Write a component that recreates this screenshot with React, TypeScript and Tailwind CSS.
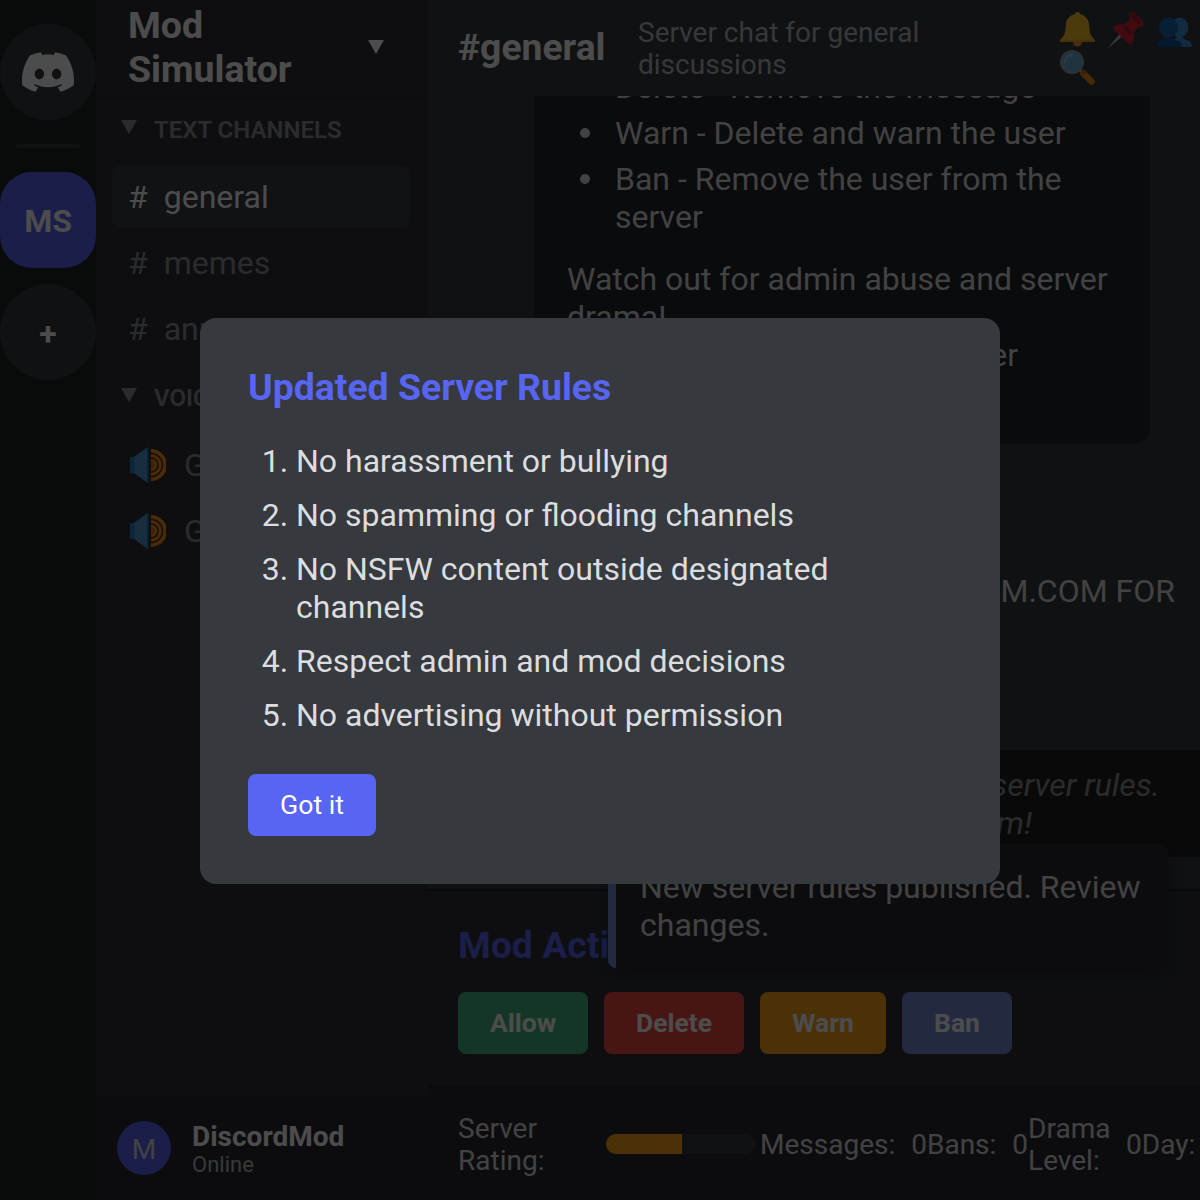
import { useState } from "react";
import { SiDiscord } from "react-icons/si";

const TEXT_CHANNELS = ["general", "memes", "announcements"];
const VOICE_CHANNELS = ["General", "Gaming"];

const RULES = [
  "No harassment or bullying",
  "No spamming or flooding channels",
  "No NSFW content outside designated channels",
  "Respect admin and mod decisions",
  "No advertising without permission",
];

const HELP_ITEMS = [
  "Delete - Remove the message",
  "Warn - Delete and warn the user",
  "Ban - Remove the user from the server",
];

const ACTIONS = [
  { label: "Allow", className: "w-[130px] bg-[#43b581]" },
  { label: "Delete", className: "w-[140px] bg-[#f04747]" },
  { label: "Warn", className: "w-[126px] bg-[#faa61a]" },
  { label: "Ban", className: "w-[110px] bg-[#7289da]" },
];

function Caret() {
  return (
    <svg width="16" height="14" viewBox="0 0 16 14" fill="currentColor" className="shrink-0">
      <path d="M0 0h16L8 14z" />
    </svg>
  );
}

function BellIcon() {
  return (
    <svg width="35" height="35" viewBox="0 0 35 35">
      <path d="M13 30a4.5 4.5 0 0 0 9 0z" fill="#f29a16" />
      <path
        d="M17.5 0c1.7 0 2.6 1 2.6 2.3 5.3 1.2 8.6 5 9 10.5.4 6.500.6 10 4.4 13.700 1 1 1.500 1.800 1.500 3.500H0c0-1.700.5-2.500 1.500-3.500C5.300 22.800 5.500 19.300 5.900 12.800c.4-5.500 3.700-9.300 9-10.500C14.900 1 15.800 0 17.500 0z"
        fill="#fbc62a"
      />
      <path d="M.5 27.500h34c.3.7.5 1.500.5 2.500H0c0-1 .2-1.800.5-2.500z" fill="#eba91c" />
    </svg>
  );
}

function PinIcon() {
  return (
    <svg width="35" height="35" viewBox="0 0 35 35">
      <path d="M11.500 21.500L.6 34.400l12.900-10.600z" fill="#b8c4cc" stroke="#b8c4cc" strokeWidth=".8" strokeLinejoin="round" />
      <path
        d="M21 .8c1.200-1.200 3.500-.7 6 1.400l5.500 5.700c2.200 2.700 2.900 5.200 1.700 6.400-1 1-2.700 1-4.500.2l-5.300 6.300c1 3.600.6 7.300-1.500 10.300-1.200 1.500-3 .9-5.200-.9L6.300 19.300c-1.900-2.200-2.400-4-.9-5.200 3-2 6.500-2.400 10-1.500l5.800-5.300C20.200 5.300 19.800 2 21 .8z"
        fill="#dd2638"
      />
      <path d="M22 1.500c1.700-.6 4.200 1 6.700 3.600s4.100 5.400 3.300 6.900c-1.500 1-4.500-.8-7-3.400s-4-5.800-3-7.100z" fill="#b31b2c" />
      <path d="M16 13l8 7.500-2.500 2.500-8-7.500z" fill="#b31b2c" />
    </svg>
  );
}

function PeopleIcon() {
  return (
    <svg width="35" height="35" viewBox="0 0 35 35">
      <ellipse cx="22.500" cy="15.500" rx="8.800" ry="10" fill="#3f91d0" />
      <path d="M15 35c0-6 2-9 6.500-10h4c.5 1.500 2 2.500 5.500 3.500 2.600.8 4 3 4 6.500z" fill="#3f91d0" />
      <ellipse cx="11.500" cy="15.500" rx="9.500" ry="10" fill="#1769ad" />
      <path d="M0 35c0-4 1.500-6.300 5-7.300 2-.6 3-1.200 3-2.700h7c0 1.500 1 2.100 3 2.700 4.500 1.300 7 3.300 7 7.300z" fill="#10509b" />
    </svg>
  );
}

function SearchIcon() {
  return (
    <svg width="35" height="35" viewBox="0 0 35 35">
      <path d="M18 18l6 6" stroke="#9aa5ad" strokeWidth="3" />
      <circle cx="12" cy="12" r="11" fill="#6dadd3" stroke="#92a4b0" strokeWidth="2" />
      <path d="M5 12a7 7 0 0 1 7-7" fill="none" stroke="#8dc9e4" strokeWidth="2.500" strokeLinecap="round" />
      <path d="M23.500 23.500L31.500 31.500" stroke="#f28a13" strokeWidth="6.500" strokeLinecap="round" />
      <path d="M22 21l3 3" stroke="#c0741e" strokeWidth="4" />
    </svg>
  );
}

function SpeakerIcon() {
  return (
    <svg width="36" height="36" viewBox="0 0 36 36">
      <path d="M4 10L18 0v36L4 26z" fill="#4a9cd8" />
      <path d="M0 10h4.500v16H0z" fill="#2583c9" />
      <path d="M17 1h2v34h-2z" fill="#27669c" />
      <path d="M21 2a16 16 0 0 1 0 32z" fill="#f6921e" />
      <path
        d="M21 6.500a11.500 11.500 0 0 1 0 23M21 11a7 7 0 0 1 0 14"
        fill="none"
        stroke="#4d3414"
        strokeWidth="1.600"
      />
      <path d="M21 14.500a3.500 3.500 0 0 1 0 7z" fill="#c9780f" />
    </svg>
  );
}

function ServerRail() {
  return (
    <nav className="flex w-24 shrink-0 flex-col items-center bg-[#202224] pt-6 font-bold text-white">
      <div className="flex size-24 items-center justify-center rounded-full bg-[#36393f]">
        <SiDiscord size={52} />
      </div>
      <div className="my-6 h-1 w-16 rounded-sm bg-[#36393f]" />
      <div className="flex size-24 items-center justify-center rounded-[32px] bg-[#5865f2] pt-0.5 text-[32px]">MS</div>
      <div className="mt-4 flex size-24 items-center justify-center rounded-full bg-[#36393f] pt-[3px] text-[32px]">+</div>
    </nav>
  );
}

function Category({ label }: { label: string }) {
  return (
    <div className="flex h-7 items-center gap-[17px] pl-[9px] text-2xl font-semibold text-[#8e9297]">
      <span className="-mt-1.5">
        <Caret />
      </span>
      <span className="whitespace-nowrap">{label}</span>
    </div>
  );
}

function Sidebar() {
  return (
    <aside className="flex w-[332px] shrink-0 flex-col bg-[#2f3136]">
      <header className="flex h-[98px] items-center justify-between border-b-2 border-[#26282c] pr-11 pl-8 text-white">
        <h1 className="-mt-0.5 w-[180px] text-[37.5px] leading-[44px] font-bold">Mod Simulator</h1>
        <span className="-mt-0.5">
          <Caret />
        </span>
      </header>
      <div className="flex-1 pt-[18px] pr-[18px] pl-4">
        <Category label="TEXT CHANNELS" />
        <ul className="mt-[22px] flex flex-col gap-1">
          {TEXT_CHANNELS.map((name) => (
            <li
              key={name}
              className={
                name === "general"
                  ? "flex h-[62px] items-center gap-4 rounded-lg bg-[#393c43] px-4 text-white"
                  : "flex h-[62px] items-center gap-4 rounded-lg px-4 text-[#8e9297]"
              }
            >
              <span>#</span>
              <span>{name}</span>
            </li>
          ))}
        </ul>
        <div className="mt-6">
          <Category label="VOICE CHANNELS" />
        </div>
        <ul className="mt-[22px] flex flex-col gap-1">
          {VOICE_CHANNELS.map((name) => (
            <li key={name} className="flex h-[62px] items-center gap-4 px-4 text-[#8e9297]">
              <span className="w-10 pl-0.5">
                <SpeakerIcon />
              </span>
              <span>{name}</span>
            </li>
          ))}
        </ul>
      </div>
      <footer className="flex h-[104px] items-center gap-[21px] bg-[#292b2f] pl-[21px]">
        <div className="flex size-[54px] items-center justify-center rounded-full bg-[#5865f2] pt-1 text-[28px] text-[#dcddde]">M</div>
        <div className="pt-0.5">
          <div className="text-[28px] leading-8 font-bold text-white">DiscordMod</div>
          <div className="text-[22px] leading-6 text-[#b9bbbe]">Online</div>
        </div>
      </footer>
    </aside>
  );
}

function ChatHeader() {
  return (
    <header className="flex h-24 shrink-0 items-center bg-[#36393f] pl-[30px]">
      <h2 className="-mt-0.5 w-[180px] shrink-0 text-[37.3px] font-bold text-white">#general</h2>
      <p className="mt-0.5 w-[422px] shrink-0 pr-24 text-[28px] leading-8 text-[#b9bbbe]">
        Server chat for general discussions
      </p>
      <div className="flex w-[136px] shrink-0 flex-wrap gap-x-[13.5px] gap-y-[3px]">
        <BellIcon />
        <PinIcon />
        <PeopleIcon />
        <SearchIcon />
      </div>
    </header>
  );
}

function Messages() {
  return (
    <section className="flex min-h-0 flex-1 flex-col justify-end overflow-hidden leading-[38px] text-[#dcddde]">
      <div className="mr-[50px] ml-[106px] rounded-2xl bg-[#242529] px-[33px] pb-8">
        <ul className="flex flex-col gap-2 pl-[13px]">
          {HELP_ITEMS.map((item) => (
            <li key={item} className="flex gap-[25px]">
              <span className="mt-[14px] size-2.5 shrink-0 rounded-full bg-[#dcddde]" />
              <span>{item}</span>
            </li>
          ))}
        </ul>
        <p className="mt-6">Watch out for admin abuse and server drama!</p>
        <p className="w-[451px] text-right whitespace-nowrap">Your job is to run the server</p>
        <p>Good luck!</p>
      </div>
      <div className="mt-[90px] mb-[140px] pl-[106px]">
        <div className="font-bold">Spammer</div>
        <p className="w-[641px] text-right whitespace-nowrap">CHECK OUT WWW.SPAM.COM FOR</p>
      </div>
      <div className="mb-8 h-[107px] shrink-0 bg-[#202020] pt-4 pr-10 text-right text-[#8e9297] italic">
        <p>An admin has updated the server rules.</p>
        <p className="pr-[128px]">Be sure to read them!</p>
      </div>
    </section>
  );
}

function ModPanel() {
  return (
    <section className="h-[197px] shrink-0 border-t-2 border-[#202225] bg-[#2f3136] pt-8 pl-[30px]">
      <h3 className="text-[37.4px] leading-[44px] font-bold text-[#5865f2]">Mod Actions</h3>
      <div className="mt-[25px] flex gap-4">
        {ACTIONS.map((a) => (
          <button key={a.label} className={`h-[62px] rounded-lg text-[26.5px] font-bold text-white ${a.className}`}>
            {a.label}
          </button>
        ))}
      </div>
    </section>
  );
}

function StatsBar() {
  return (
    <footer className="flex h-[114px] shrink-0 items-center overflow-hidden border-t-2 border-[#202225] bg-[#292b2f] pt-0.5 pl-[30px] text-[28px] leading-8 text-[#dcddde]">
      <div className="w-[148px] shrink-0 pr-10">Server Rating:</div>
      <div className="mr-1 -mt-0.5 h-5 w-[150px] shrink-0 overflow-hidden rounded-full bg-[#36393f]">
        <div className="h-full w-[76px] bg-[#faa61a]" />
      </div>
      <div className="flex shrink-0 gap-4">
        <span>Messages:</span>
        <span>0</span>
      </div>
      <div className="flex shrink-0 gap-4">
        <span>Bans:</span>
        <span>0</span>
      </div>
      <div className="flex shrink-0 items-center gap-4">
        <span className="w-[82px]">Drama Level:</span>
        <span>0</span>
      </div>
      <span className="shrink-0">Day:</span>
    </footer>
  );
}

export default function App() {
  const [showRules, setShowRules] = useState(true);

  return (
    <div className="relative flex h-[1200px] w-[1200px] overflow-hidden bg-[#36393f] font-[Roboto,sans-serif] text-[32px] leading-[38px]">
      <ServerRail />
      <Sidebar />
      <main className="flex min-w-0 flex-1 flex-col">
        <ChatHeader />
        <Messages />
        <ModPanel />
        <StatsBar />
      </main>

      {/* Toast */}
      <div className="absolute top-[844px] left-[608px] w-[560px] rounded-lg border-l-8 border-[#7289da] bg-[#292b2f] p-6 text-[#dcddde] shadow-[0_4px_16px_rgba(0,0,0,0.3)]">
        New server rules published. Review changes.
      </div>

      {/* Rules modal */}
      {showRules && (
        <div className="absolute inset-0 flex items-center justify-center bg-black/70 pt-0.5">
          <div className="h-[566px] w-[800px] rounded-2xl bg-[#36393e] px-12 pt-[47px] text-[#dcddde]">
            <h2 className="text-[37.4px] leading-[44px] font-bold text-[#5865f2]">Updated Server Rules</h2>
            <ol className="mt-[33px] list-decimal pl-12">
              {RULES.map((rule) => (
                <li key={rule} className="mb-4">
                  {rule}
                </li>
              ))}
            </ol>
            <button
              onClick={() => setShowRules(false)}
              className="mt-10 flex h-[62px] w-32 items-center justify-center rounded-lg bg-[#5865f2] text-[26.67px] text-white"
            >
              Got it
            </button>
          </div>
        </div>
      )}
    </div>
  );
}
